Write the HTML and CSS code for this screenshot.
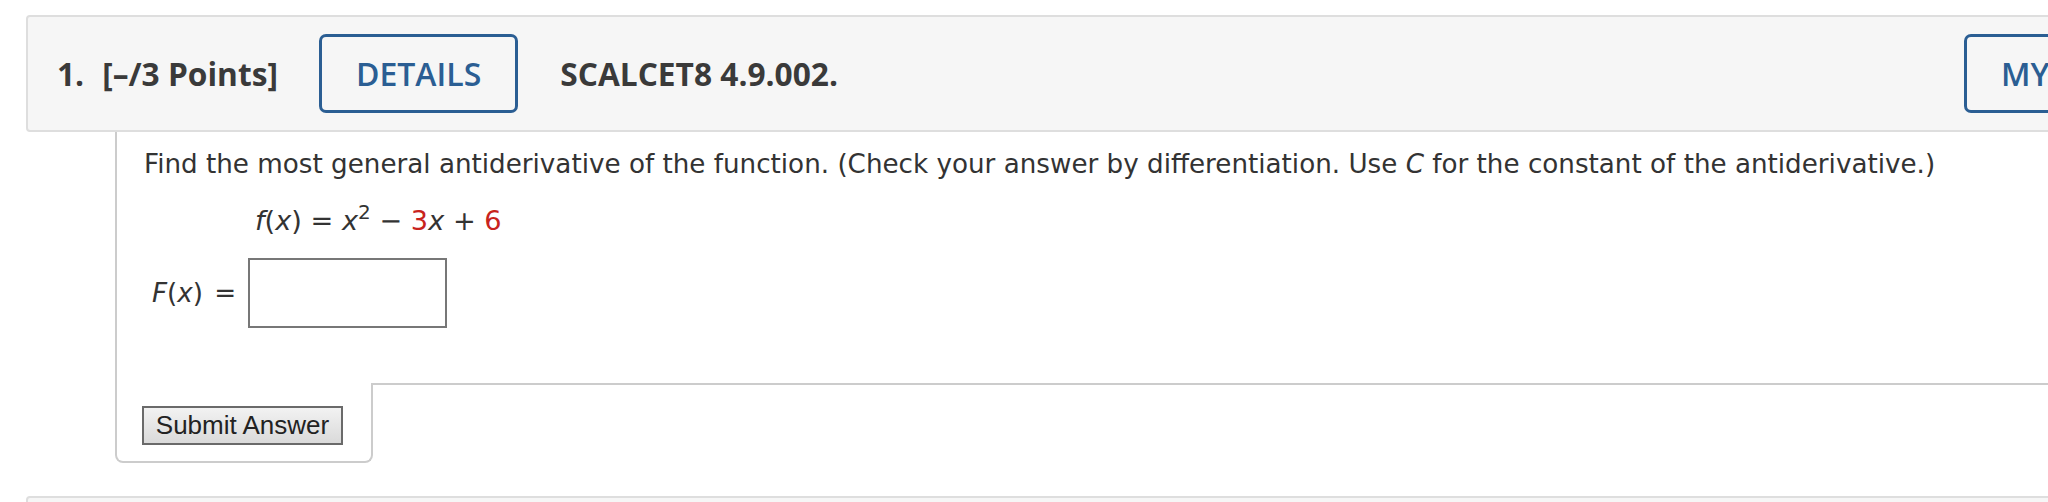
FILE: index.html
```html
<!DOCTYPE html>
<html lang="en">
<head>
<meta charset="utf-8">
<title>SCALCET8 4.9.002.</title>
<link rel="stylesheet" href="styles.css">
</head>
<body>
<div class="page">
  <div class="qheader">
    <span class="qnum">1.</span>
    <span class="qpoints">[–/3 Points]</span>
    <button class="hbtn">DETAILS</button>
    <span class="qtitle">SCALCET8 4.9.002.</span>
    <div class="actions">
      <button class="hbtn">MY NOTES</button>
      <button class="hbtn">ASK YOUR TEACHER</button>
    </div>
  </div>

  <div class="qbody">
    <div class="qcontent">
      <p class="prompt">Find the most general antiderivative of the function. (Check your answer by differentiation. Use <i>C</i> for the constant of the antiderivative.)</p>
      <p class="func"><i>f</i>(<i>x</i>) = <i>x</i><sup>2</sup> − <span class="red">3</span><i>x</i> + <span class="red">6</span></p>
      <div class="answer">
        <span class="alabel"><i>F</i>(<i>x</i>) =</span>
        <input class="abox" type="text" aria-label="F(x)">
      </div>
    </div>
    <div class="qfoot">
      <div class="submitcell">
        <button class="submit">Submit Answer</button>
      </div>
      <div class="sidecell"></div>
    </div>
  </div>

  <div class="qheader next"></div>
</div>
</body>
</html>
```
FILE: styles.css
```css
html, body {
  margin: 0;
  padding: 0;
  overflow: hidden;
  background: #fff;
}

.page {
  width: 2600px;
  padding: 15px 0 0 26px;
  box-sizing: border-box;
}

.qheader {
  width: 2424px;
  height: 117px;
  box-sizing: border-box;
  background: #f6f6f6;
  border: 2px solid #dedede;
  border-radius: 4px;
  display: flex;
  align-items: center;
  padding: 0 24px 0 29px;
  font-family: "Open Sans", sans-serif;
  font-size: 31.7px;
  font-weight: 700;
  color: #3a3a3a;
}

.qnum {
  margin-right: 18px;
}

.qpoints {
  margin-right: 41px;
}

.hbtn {
  height: 79px;
  box-sizing: border-box;
  border: 3px solid #2b5e93;
  border-radius: 7px;
  background: transparent;
  color: #2b5e93;
  font-family: "Open Sans", sans-serif;
  font-size: 32px;
  font-weight: 600;
  padding: 0 34px;
  white-space: nowrap;
}

.qtitle {
  margin-left: 42px;
}

.actions {
  margin-left: auto;
  width: 460px;
  display: flex;
  gap: 24px;
}

.qbody {
  margin-left: 89px;
  font-family: "DejaVu Sans", Verdana, sans-serif;
  font-size: 26.2px;
  color: #333;
}

.qcontent {
  border-left: 2px solid #cccccc;
  padding: 14px 0 55px 27px;
}

.prompt {
  margin: 0;
  line-height: 36px;
}

.func {
  margin: 21px 0 0 111px;
  line-height: 36px;
  font-size: 27.2px;
}

.func sup {
  font-size: 20px;
  line-height: 0;
  vertical-align: 11px;
}

.red {
  color: #c8231d;
}

.answer {
  margin-top: 19px;
  display: flex;
  align-items: center;
  padding-left: 8px;
  line-height: 36px;
}

.alabel {
  margin-right: 12px;
  word-spacing: 3px;
}

.abox {
  width: 199px;
  height: 70px;
  box-sizing: border-box;
  border: 2px solid #777;
  background: #fff;
  margin: 0;
}

.qfoot {
  display: flex;
}

.submitcell {
  width: 258px;
  height: 80px;
  box-sizing: border-box;
  border-left: 2px solid #cccccc;
  border-right: 2px solid #cccccc;
  border-bottom: 2px solid #cccccc;
  border-radius: 0 0 8px 8px;
  padding: 23px 0 0 25px;
}

.sidecell {
  flex: 1;
  border-top: 2px solid #cccccc;
}

.submit {
  width: 201px;
  height: 39px;
  box-sizing: border-box;
  border: 2px solid #6a6a6a;
  background: linear-gradient(#f2f2f2, #dadada);
  font-family: "Liberation Sans", Arial, sans-serif;
  font-size: 26px;
  color: #222;
  padding: 0;
  line-height: 35px;
}

.qheader.next {
  margin-top: 33px;
}
```
